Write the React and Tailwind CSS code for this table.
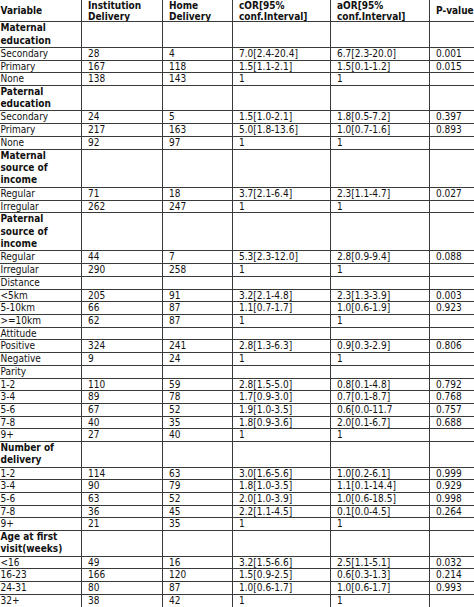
import React from "react";

const H = {
  1: "h-[12.72px]",
  2: "h-[25.44px]",
  3: "h-[38.16px]",
};

const rows = [
  { g: ["Maternal", "education"], b: true },
  { c: ["Secondary", "28", "4", "7.0[2.4-20.4]", "6.7[2.3-20.0]", "0.001"] },
  { c: ["Primary", "167", "118", "1.5[1.1-2.1]", "1.5[0.1-1.2]", "0.015"] },
  { c: ["None", "138", "143", "1", "1", ""] },
  { g: ["Paternal", "education"], b: true },
  { c: ["Secondary", "24", "5", "1.5[1.0-2.1]", "1.8[0.5-7.2]", "0.397"] },
  { c: ["Primary", "217", "163", "5.0[1.8-13.6]", "1.0[0.7-1.6]", "0.893"] },
  { c: ["None", "92", "97", "1", "1", ""] },
  { g: ["Maternal", "source of", "income"], b: true },
  { c: ["Regular", "71", "18", "3.7[2.1-6.4]", "2.3[1.1-4.7]", "0.027"] },
  { c: ["Irregular", "262", "247", "1", "1", ""] },
  { g: ["Paternal", "source of", "income"], b: true },
  { c: ["Regular", "44", "7", "5.3[2.3-12.0]", "2.8[0.9-9.4]", "0.088"] },
  { c: ["Irregular", "290", "258", "1", "1", ""] },
  { g: ["Distance"] },
  { c: ["<5km", "205", "91", "3.2[2.1-4.8]", "2.3[1.3-3.9]", "0.003"] },
  { c: ["5-10km", "66", "87", "1.1[0.7-1.7]", "1.0[0.6-1.9]", "0.923"] },
  { c: [">=10km", "62", "87", "1", "1", ""] },
  { g: ["Attitude"] },
  { c: ["Positive", "324", "241", "2.8[1.3-6.3]", "0.9[0.3-2.9]", "0.806"] },
  { c: ["Negative", "9", "24", "1", "1", ""] },
  { g: ["Parity"] },
  { c: ["1-2", "110", "59", "2.8[1.5-5.0]", "0.8[0.1-4.8]", "0.792"] },
  { c: ["3-4", "89", "78", "1.7[0.9-3.0]", "0.7[0.1-8.7]", "0.768"] },
  { c: ["5-6", "67", "52", "1.9[1.0-3.5]", "0.6[0.0-11.7", "0.757"] },
  { c: ["7-8", "40", "35", "1.8[0.9-3.6]", "2.0[0.1-6.7]", "0.688"] },
  { c: ["9+", "27", "40", "1", "1", ""] },
  { g: ["Number of", "delivery"], b: true },
  { c: ["1-2", "114", "63", "3.0[1.6-5.6]", "1.0[0.2-6.1]", "0.999"] },
  { c: ["3-4", "90", "79", "1.8[1.0-3.5]", "1.1[0.1-14.4]", "0.929"] },
  { c: ["5-6", "63", "52", "2.0[1.0-3.9]", "1.0[0.6-18.5]", "0.998"] },
  { c: ["7-8", "36", "45", "2.2[1.1-4.5]", "0.1[0.0-4.5]", "0.264"] },
  { c: ["9+", "21", "35", "1", "1", ""] },
  { g: ["Age at first", "visit(weeks)"], b: true },
  { c: ["<16", "49", "16", "3.2[1.5-6.6]", "2.5[1.1-5.1]", "0.032"] },
  { c: ["16-23", "166", "120", "1.5[0.9-2.5]", "0.6[0.3-1.3]", "0.214"] },
  { c: ["24-31", "80", "87", "1.0[0.6-1.7]", "1.0[0.6-1.7]", "0.993"] },
  { c: ["32+", "38", "42", "1", "1", ""] },
];

const grid =
  "grid grid-cols-[82px_81px_70px_98px_99px_1fr] border-b border-[#3a3a3a]";
const cell = "border-r border-[#3a3a3a] pl-[6px] whitespace-nowrap overflow-hidden";
const lastCell = "pl-[6px] whitespace-nowrap overflow-hidden";
const firstCell =
  "border-r border-[#3a3a3a] pl-[0.5px] whitespace-nowrap overflow-hidden";

function Header() {
  const hdr = [
    ["Variable"],
    ["Institution", "Delivery"],
    ["Home", "Delivery"],
    ["cOR[95%", "conf.Interval]"],
    ["aOR[95%", "conf.Interval]"],
    ["P-value"],
  ];
  return (
    <div className={`${grid} h-[22.44px] font-bold`}>
      {hdr.map((lines, i) => (
        <div
          key={i}
          className={`${i === 0 ? firstCell : i === 5 ? lastCell : cell} flex flex-col justify-center pt-[1px] leading-[11.7px]`}
        >
          {lines.map((l, j) => (
            <span key={j}>{l}</span>
          ))}
        </div>
      ))}
    </div>
  );
}

function Row({ r }) {
  if (r.g) {
    const n = r.g.length;
    return (
      <div className={`${grid} ${H[n]}`}>
        <div
          className={`${firstCell} flex flex-col ${n > 1 ? "leading-[12.3px]" : "leading-[11.72px]"} ${r.b ? "font-bold" : ""}`}
        >
          {r.g.map((l, j) => (
            <span key={j}>{l}</span>
          ))}
        </div>
        <div className={cell}></div>
        <div className={cell}></div>
        <div className={cell}></div>
        <div className={cell}></div>
        <div className={lastCell}></div>
      </div>
    );
  }
  return (
    <div className={`${grid} ${H[1]} leading-[11.72px]`}>
      {r.c.map((t, i) => (
        <div key={i} className={i === 0 ? firstCell : i === 5 ? lastCell : cell}>
          {t}
        </div>
      ))}
    </div>
  );
}

export default function App() {
  return (
    <div
      className="w-[474px] h-[607px] overflow-hidden bg-white text-[#111] text-[10px]"
      style={{ fontFamily: '"DejaVu Sans Condensed", "DejaVu Sans", sans-serif' }}
    >
      <Header />
      {rows.map((r, i) => (
        <Row key={i} r={r} />
      ))}
    </div>
  );
}
